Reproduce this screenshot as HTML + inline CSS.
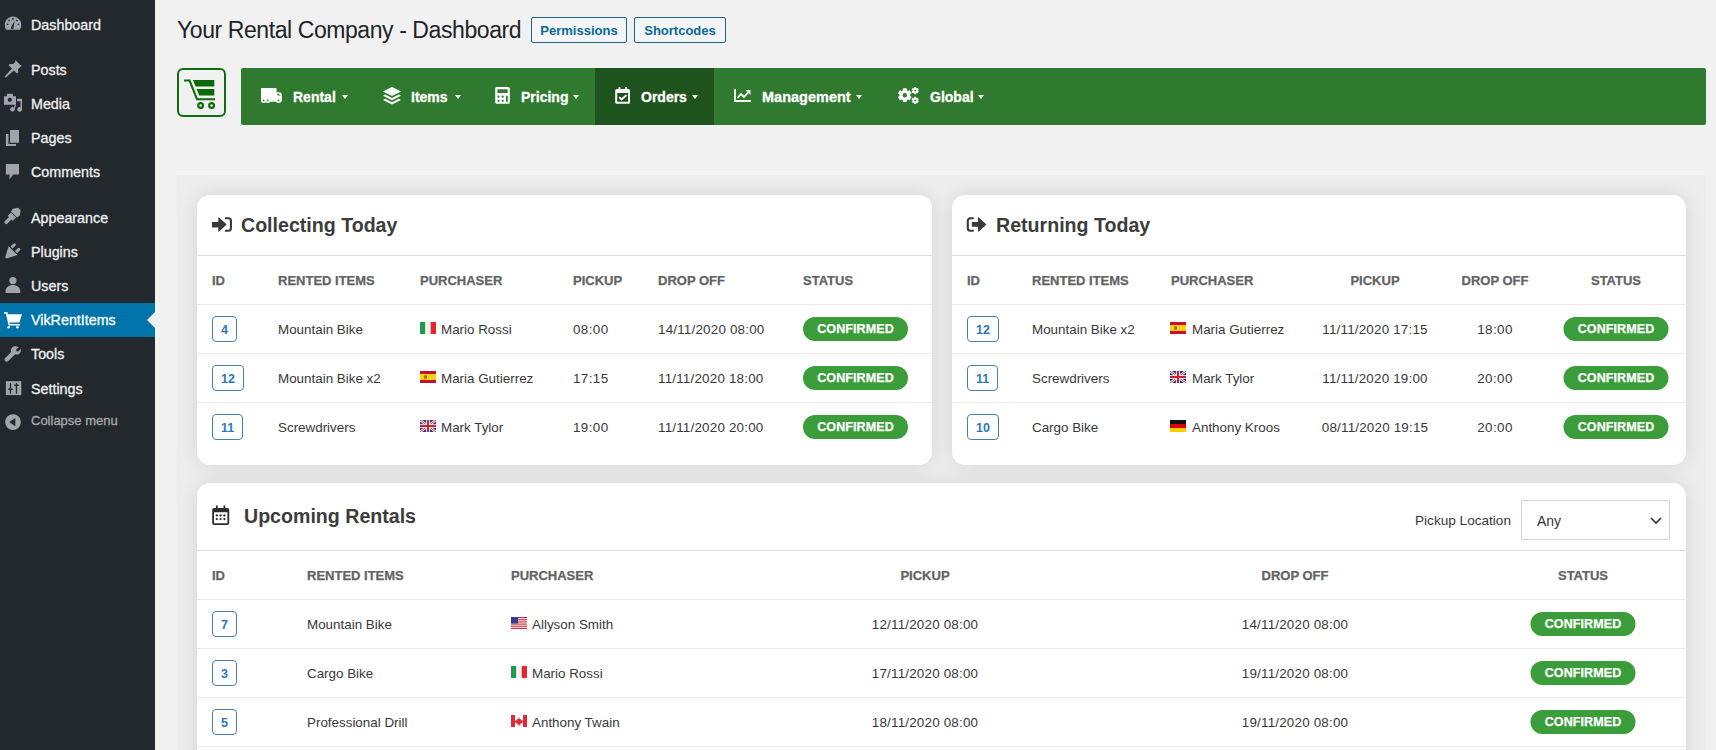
<!DOCTYPE html>
<html><head><meta charset="utf-8">
<style>
*{box-sizing:border-box;margin:0;padding:0}
html,body{width:1716px;height:750px;overflow:hidden;background:#f1f1f1;font-family:"Liberation Sans",sans-serif;position:relative}
.abs{position:absolute}
#side{position:absolute;left:0;top:0;width:155px;height:750px;background:#23282d}
.mi{position:absolute;left:0;width:155px;height:34px;line-height:34px;font-size:14.3px;color:#f0f0f1;white-space:nowrap;-webkit-text-stroke:.3px currentColor}
.mi span{position:absolute;left:31px;top:0}
.mi svg{position:absolute;left:4px;top:7px}
.mi.cur{background:#0073aa;color:#fff}
.mi.cur:after{content:"";position:absolute;right:0;top:9px;border:8px solid transparent;border-right-color:#f1f1f1;border-left:0}
h1{position:absolute;left:177px;top:15px;font-size:23px;letter-spacing:-0.42px;font-weight:400;line-height:30px;color:#1d2327;white-space:nowrap}
.btn{position:absolute;top:17px;height:26px;border:1px solid #1d6587;border-radius:2px;background:#f3f5f6;color:#0a6895;font-size:13px;font-weight:700;line-height:26px;text-align:center;white-space:nowrap}
#logo{position:absolute;left:177px;top:68px;width:49px;height:49px;border:2.5px solid #0e6e0e;border-radius:6px}
#nav{position:absolute;left:241px;top:68px;width:1465px;height:57px;background:#2f7a2f;border-radius:2px}
.ni{position:absolute;top:0;height:57px;color:#fff;font-size:14px;font-weight:700;line-height:57px;white-space:nowrap}
.ni svg{position:absolute}
.ni span{top:1px;line-height:57px;-webkit-text-stroke:.3px #fff}
.car{position:absolute;top:27px;width:0;height:0;border-left:3.7px solid transparent;border-right:3.7px solid transparent;border-top:4.2px solid #fff}
#wrap{position:absolute;left:177px;top:175px;width:1529px;height:600px;background:#ededed;box-shadow:0 -2px 0 #f4f4f4}
.card{position:absolute;background:#fff;border-radius:13px;box-shadow:0 0 20px rgba(0,0,0,.1)}
.ct{position:absolute;font-size:19.6px;font-weight:700;color:#3c3c3c;white-space:nowrap;line-height:24px}
.hl{position:absolute;left:0;right:0;height:1px;background:#dcdcdc}
.rl{position:absolute;left:0;right:0;height:1px;background:#ececec}
.th{position:absolute;font-size:13px;font-weight:700;color:#636363;white-space:nowrap;line-height:16px;-webkit-text-stroke:.25px #636363}
.td{position:absolute;font-size:13.4px;color:#383838;white-space:nowrap;line-height:16px}
.c{transform:translateX(-50%)}
.dt{letter-spacing:.2px}
.tm{letter-spacing:.4px}
.idb{position:absolute;height:26px;border:1px solid #4a7fae;border-radius:4px;color:#2a78bb;font-size:12.5px;font-weight:700;line-height:26px;padding:0 8px;white-space:nowrap;text-align:center}
.ok{position:absolute;width:105px;height:24px;border-radius:12px;background:#3a9d3a;color:#fff;font-size:12.5px;font-weight:700;line-height:24px;-webkit-text-stroke:.25px #fff;letter-spacing:.1px;text-align:center;white-space:nowrap}
.flag{position:absolute;width:16px;height:12px}
.it{background:linear-gradient(90deg,#1e9a46 0 33%,#f4f4f4 33% 66%,#e0283a 66%)}
.es{background:linear-gradient(#c8102e 0 25%,#f5c400 25% 75%,#c8102e 75%)}
.de{background:linear-gradient(#111 0 33%,#dd0000 33% 66%,#ffce00 66%)}
.gb{background:#1f3c88}
.us{background:repeating-linear-gradient(#c8202f 0 1.57px,#fff 1.57px 3.14px)}
.ca{background:linear-gradient(90deg,#e0283a 0 25%,#fff 25% 75%,#e0283a 75%)}
</style></head><body>
<div id="side"><svg class="abs" style="left:0;top:0;z-index:2" width="30" height="450" viewBox="0 0 30 450">
<g fill="#a0a5aa">
<path d="M13 16.6C8.4 16.6 4.8 20.3 4.8 25c0 1.8.5 3.4 1.3 4.8h13.8c.8-1.4 1.3-3 1.3-4.8 0-4.7-3.7-8.4-8.2-8.4z"/>
</g>
<g fill="#23282d">
<circle cx="7.6" cy="24.3" r=".9"/><circle cx="9.1" cy="20.6" r=".9"/><circle cx="13" cy="18.9" r=".9"/><circle cx="16.9" cy="20.6" r=".9"/><circle cx="18.4" cy="24.3" r=".9"/>
<path d="M14.6 20.8l-1 6.4a1.4 1.4 0 11-2.2-.6z"/>
</g>
<path fill="#a0a5aa" d="M15.2 60l6.5 6.3-1.6.6-2 2 .2 3.4-1.3 1.3-3.2-3.2L5.6 77.7l-1-1 7.3-8.2-3.3-3.3 1.3-1.3 3.4.2 2-2z"/>
<path fill="#a0a5aa" fill-rule="evenodd" d="M4 96.2h2.6l.6-2.4h5.4l.6 2.4H16v8.6H4zM7.7 99.8a2.1 2.1 0 104.2 0 2.1 2.1 0 10-4.2 0z"/><path fill="#a0a5aa" d="M17 98.8h5v11.2h-1.5v-8.7H17zM13.5 108.2l1.5-3.6 1.1.5-1.4 3.6z"/><circle cx="19.6" cy="109.4" r="2.3" fill="#a0a5aa"/><circle cx="12.5" cy="109.2" r="2.3" fill="#a0a5aa"/>
<path fill="#a0a5aa" d="M10 130h9v12.7h-9zM5.9 133.9h2.6v10.2H16v2H5.9z"/>
<path fill="#a0a5aa" d="M5.9 164h13.1v10.5h-5.8l-3.7 4.9v-4.9H5.9z"/>
<path fill="#a0a5aa" transform="translate(4.9 223.6) rotate(-45)" d="M1.8-1.8H8v3.6H1.8A1.8 1.8 0 011.8-1.8zM7.6-3.6h4.6v7.2H7.6zM12.8-4.2L16-4.9l4.6 3.2v3.4L16 4.9l-3.2-.7z"/>
<path fill="#a0a5aa" transform="translate(6 257.6) rotate(-45)" d="M0.4 -1.2L9.9 -6.3V6.3L0.4 1.2A1.3 1.3 0 010.4-1.2zM11 -4.7h4a1.5 1.5 0 010 3h-4zM11 1.7h4a1.5 1.5 0 010 3h-4z"/>
<circle cx="12.9" cy="280.6" r="3.6" fill="#a0a5aa"/><path fill="#a0a5aa" d="M5.6 293v-2.5c0-3 3.3-5.6 7.3-5.6s7.3 2.6 7.3 5.6V293z"/>
<g fill="#fff"><path d="M4.1 312h3.2l.7 2.3h14l-2.6 8.2H9.4l.4 1.5h10.3v1.6H8.6L5.9 313.7H4.1z"/><circle cx="8.6" cy="327.3" r="1.3"/><circle cx="17.4" cy="327.3" r="1.3"/></g>
<path fill="#a0a5aa" d="M18.8 346.9l-2.7 2.7.3 1.7 1.7.3 2.7-2.7c.5 1.9-.1 3.9-1.8 5-1.2.7-2.6.8-3.8.3L8.3 361.1c-.9.9-2.3.9-3.1 0-.9-.9-.9-2.2 0-3.1l6-6c-.5-1.2-.4-2.6.3-3.8 1.1-1.7 3.1-2.3 5-1.8z"/>
<path fill="#a0a5aa" d="M5.9 381.2h15.4v13.9H5.9z"/>
<g fill="#23282d"><path d="M9.8 383v5.5H8.2v1.5h1.6v3.8h1.3V390h1.6v-1.5h-1.6V383zM15.8 383v1.5h-1.6v1.5h1.6v7.8h1.3V386h1.6v-1.5h-1.6V383z"/></g>
<circle cx="13" cy="422.1" r="7.9" fill="#a0a5aa"/><path fill="#23282d" d="M15.3 418v8.2L9.3 422.1z"/>
</svg>
  <div class="mi" style="top:8px"><span>Dashboard</span></div>
  <div class="mi" style="top:53px"><span>Posts</span></div>
  <div class="mi" style="top:87px"><span>Media</span></div>
  <div class="mi" style="top:121px"><span>Pages</span></div>
  <div class="mi" style="top:155px"><span>Comments</span></div>
  <div class="mi" style="top:201px"><span>Appearance</span></div>
  <div class="mi" style="top:235px"><span>Plugins</span></div>
  <div class="mi" style="top:269px"><span>Users</span></div>
  <div class="mi cur" style="top:303px"><span>VikRentItems</span></div>
  <div class="mi" style="top:337px"><span>Tools</span></div>
  <div class="mi" style="top:372px"><span>Settings</span></div>
  <div class="mi" style="top:404px;font-size:13px;color:#a7aaad"><span>Collapse menu</span></div>
</div>

<h1>Your Rental Company - Dashboard</h1>
<div class="btn" style="left:531px;width:96px">Permissions</div>
<div class="btn" style="left:634px;width:92px">Shortcodes</div>

<div id="logo"><svg class="abs" style="left:-2.5px;top:-2.5px" width="49" height="49" viewBox="0 0 49 49"><path fill="none" stroke="#0b6b0b" stroke-width="2" d="M7 12.6h5.6l7.4 18.6h18"/><path fill="#0b6b0b" d="M15.9 12h21.4v6.6H18.6zM19.6 21.1h17.7v6.4H22.2z"/><circle cx="23.6" cy="37.5" r="2.4" fill="none" stroke="#0b6b0b" stroke-width="2.2"/><circle cx="34.6" cy="37.5" r="2.4" fill="none" stroke="#0b6b0b" stroke-width="2.2"/></svg></div>

<div id="nav">
  <div class="ni" style="left:0;width:128px">
    <svg style="left:20px;top:20px" width="22" height="16" viewBox="0 0 22 16"><path fill="#fff" d="M.8 0h14a.8.8 0 01.8.8v3.5h2.3a3 3 0 013 3v5.7a.8.8 0 01-.8.8H0V.8A.8.8 0 01.8 0z"/><path fill="#2f7a2f" d="M16.4 5.8h1.2l1.6 1.8h-2.8z"/><g fill="#fff"><circle cx="2.6" cy="12.4" r="2.5"/><circle cx="6.8" cy="12.4" r="2.5"/><circle cx="17.6" cy="12.4" r="2.5"/></g><g fill="#2f7a2f"><circle cx="2.6" cy="12.4" r=".9"/><circle cx="6.8" cy="12.4" r=".9"/><circle cx="17.6" cy="12.4" r=".9"/></g></svg>
    <span class="abs" style="left:52px">Rental</span><i class="car" style="left:100.5px"></i></div>
  <div class="ni" style="left:128px;width:114px">
    <svg style="left:14px;top:19px" width="18" height="18" viewBox="0 0 18 18"><path fill="#fff" d="M9 0l9 4.5-9 4.5-9-4.5z"/><path fill="#fff" d="M2.2 7.6L9 11l6.8-3.4L18 8.7 9 13.2 0 8.7z"/><path fill="#fff" d="M2.2 11.8L9 15.2l6.8-3.4L18 12.9 9 17.4 0 12.9z"/></svg>
    <span class="abs" style="left:42px">Items</span><i class="car" style="left:86px"></i></div>
  <div class="ni" style="left:242px;width:112px">
    <svg style="left:12px;top:19px" width="16" height="17" viewBox="0 0 16 17"><path fill="#fff" fill-rule="evenodd" d="M1.7.1h11.6a1.5 1.5 0 011.5 1.5v13.6a1.5 1.5 0 01-1.5 1.5H1.7A1.5 1.5 0 01.2 15.2V1.6A1.5 1.5 0 011.7.1zM2.4 2.3v3.7h10.2V2.3zM11 8.8v5.9h1.8V8.8zM2.4 9.7a1.1 1.1 0 102.2 0 1.1 1.1 0 10-2.2 0zM6.6 9.7a1.1 1.1 0 102.2 0 1.1 1.1 0 10-2.2 0zM2.4 13.8a1.1 1.1 0 102.2 0 1.1 1.1 0 10-2.2 0zM6.6 13.8a1.1 1.1 0 102.2 0 1.1 1.1 0 10-2.2 0z"/></svg>
    <span class="abs" style="left:38px">Pricing</span><i class="car" style="left:90px"></i></div>
  <div class="ni" style="left:354px;width:119px;background:#1e531e">
    <svg style="left:20px;top:19px" width="16" height="17" viewBox="0 0 16 17"><path fill="#fff" fill-rule="evenodd" d="M3.6 0h1.8v2h4.7V0h1.8v2h1.6a1.5 1.5 0 011.5 1.5v11.8a1.5 1.5 0 01-1.5 1.5H1.7A1.5 1.5 0 01.2 15.3V3.5A1.5 1.5 0 011.7 2h1.9zM2.2 6v8.8H13V6z"/><path fill="none" stroke="#fff" stroke-width="1.9" d="M4.2 10.2l2.3 2.3 5-4.4"/></svg>
    <span class="abs" style="left:46px">Orders</span><i class="car" style="left:97px"></i></div>
  <div class="ni" style="left:473px;width:156px">
    <svg style="left:20px;top:21px" width="17" height="13" viewBox="0 0 17 13"><path fill="none" stroke="#fff" stroke-width="1.8" d="M1 0v12h16"/><path fill="none" stroke="#fff" stroke-width="1.8" d="M3.5 9l3.5-4 3 3 4.5-5"/><path fill="#fff" d="M11.5 1h5v5z"/></svg>
    <span class="abs" style="left:48px;font-size:14.5px">Management</span><i class="car" style="left:142px"></i></div>
  <div class="ni" style="left:629px;width:140px">
    <svg style="left:27px;top:19px" width="24" height="19" viewBox="0 0 24 19"><path fill="#fff" fill-rule="evenodd" d="M5.96 1.34 L9.64 1.34 L9.84 3.20 L11.11 3.93 L12.82 3.18 L14.66 6.36 L13.15 7.47 L13.15 8.93 L14.66 10.04 L12.82 13.22 L11.11 12.47 L9.84 13.20 L9.64 15.06 L5.96 15.06 L5.76 13.20 L4.49 12.47 L2.78 13.22 L0.94 10.04 L2.45 8.93 L2.45 7.47 L0.94 6.36 L2.78 3.18 L4.49 3.93 L5.76 3.20ZM5.60 8.20a2.2 2.2 0 1 0 4.4 0a2.2 2.2 0 1 0 -4.4 0ZM17.24 0.03 L19.16 0.03 L19.22 1.10 L19.85 1.47 L20.82 0.98 L21.77 2.64 L20.88 3.23 L20.88 3.97 L21.77 4.56 L20.82 6.22 L19.85 5.73 L19.22 6.10 L19.16 7.17 L17.24 7.17 L17.18 6.10 L16.55 5.73 L15.58 6.22 L14.63 4.56 L15.52 3.97 L15.52 3.23 L14.63 2.64 L15.58 0.98 L16.55 1.47 L17.18 1.10ZM17.30 3.60a0.9 0.9 0 1 0 1.8 0a0.9 0.9 0 1 0 -1.8 0ZM17.24 9.83 L19.16 9.83 L19.22 10.90 L19.85 11.27 L20.82 10.78 L21.77 12.44 L20.88 13.03 L20.88 13.77 L21.77 14.36 L20.82 16.02 L19.85 15.53 L19.22 15.90 L19.16 16.97 L17.24 16.97 L17.18 15.90 L16.55 15.53 L15.58 16.02 L14.63 14.36 L15.52 13.77 L15.52 13.03 L14.63 12.44 L15.58 10.78 L16.55 11.27 L17.18 10.90ZM17.30 13.40a0.9 0.9 0 1 0 1.8 0a0.9 0.9 0 1 0 -1.8 0Z"/></svg>
    <span class="abs" style="left:60px">Global</span><i class="car" style="left:108.3px"></i></div>
</div>

<div id="wrap"></div>

<!-- Card 1 -->
<div class="card" style="left:197px;top:195px;width:735px;height:270px">
  <svg class="abs" style="left:15px;top:22px" width="20" height="15" viewBox="0 0 20 15"><path fill="#3a3a3a" d="M0 5h6.3V0.8a.5.5 0 01.8-.4l7.1 6.7a.6.6 0 010 .8l-7.1 6.7a.5.5 0 01-.8-.4V10.6H0z"/><path fill="none" stroke="#3a3a3a" stroke-width="2.1" d="M12.9 1.3h3.5a2.5 2.5 0 012.5 2.5v7.4a2.5 2.5 0 01-2.5 2.5h-3.5"/></svg>
  <div class="ct" style="left:44px;top:18px">Collecting Today</div>
  <div class="hl" style="top:60px"></div>
  <div class="th" style="left:15px;top:78px">ID</div>
  <div class="th" style="left:81px;top:78px">RENTED ITEMS</div>
  <div class="th" style="left:223px;top:78px">PURCHASER</div>
  <div class="th" style="left:376px;top:78px">PICKUP</div>
  <div class="th" style="left:461px;top:78px">DROP OFF</div>
  <div class="th" style="left:606px;top:78px">STATUS</div>
  <div class="rl" style="top:109px"></div>
  <div class="rl" style="top:158px"></div>
  <div class="rl" style="top:207px"></div>
  <!-- rows -->
  <div class="idb" style="left:15px;top:121px">4</div>
  <div class="td" style="left:81px;top:127px">Mountain Bike</div>
  <svg class="flag" style="left:223px;top:127px" width="16" height="12" viewBox="0 0 16 12"><rect width="5.4" height="12" fill="#1f9a4a"/><rect x="5.4" width="5.3" height="12" fill="#f5f5f5"/><rect x="10.7" width="5.3" height="12" fill="#e8232f"/></svg><div class="td" style="left:244px;top:127px">Mario Rossi</div>
  <div class="td tm" style="left:376px;top:127px">08:00</div>
  <div class="td dt" style="left:461px;top:127px">14/11/2020 08:00</div>
  <div class="ok" style="left:606px;top:122px">CONFIRMED</div>

  <div class="idb" style="left:15px;top:170px">12</div>
  <div class="td" style="left:81px;top:176px">Mountain Bike x2</div>
  <svg class="flag" style="left:223px;top:176px" width="16" height="12" viewBox="0 0 16 12"><rect width="16" height="12" fill="#c8102e"/><rect y="3" width="16" height="6" fill="#f7d117"/><rect x="4" y="4.3" width="3" height="3.4" rx=".8" fill="#b5651d"/></svg><div class="td" style="left:244px;top:176px">Maria Gutierrez</div>
  <div class="td tm" style="left:376px;top:176px">17:15</div>
  <div class="td dt" style="left:461px;top:176px">11/11/2020 18:00</div>
  <div class="ok" style="left:606px;top:171px">CONFIRMED</div>

  <div class="idb" style="left:15px;top:219px">11</div>
  <div class="td" style="left:81px;top:225px">Screwdrivers</div>
  <svg class="flag" style="left:223px;top:225px" width="16" height="12" viewBox="0 0 16 12"><rect width="16" height="12" fill="#1f3c8c"/><path d="M0 0L16 12M16 0L0 12" stroke="#fff" stroke-width="2.4"/><path d="M0 0L16 12M16 0L0 12" stroke="#d0202e" stroke-width=".9"/><path d="M8 0v12M0 6h16" stroke="#fff" stroke-width="3.6"/><path d="M8 0v12M0 6h16" stroke="#d0202e" stroke-width="2"/></svg><div class="td" style="left:244px;top:225px">Mark Tylor</div>
  <div class="td tm" style="left:376px;top:225px">19:00</div>
  <div class="td dt" style="left:461px;top:225px">11/11/2020 20:00</div>
  <div class="ok" style="left:606px;top:220px">CONFIRMED</div>
</div>

<!-- Card 2 -->
<div class="card" style="left:952px;top:195px;width:734px;height:270px">
  <svg class="abs" style="left:14px;top:22px" width="20" height="15" viewBox="0 0 20 15"><path fill="none" stroke="#3a3a3a" stroke-width="2.1" d="M7.8 1.3H4.3a2.5 2.5 0 00-2.5 2.5v7.4a2.5 2.5 0 002.5 2.5h3.5"/><path fill="#3a3a3a" d="M5.8 5h6.2V0.8a.5.5 0 01.8-.4l7.1 6.7a.6.6 0 010 .8l-7.1 6.7a.5.5 0 01-.8-.4V9.8H5.8z"/></svg>
  <div class="ct" style="left:44px;top:18px">Returning Today</div>
  <div class="hl" style="top:60px"></div>
  <div class="th" style="left:15px;top:78px">ID</div>
  <div class="th" style="left:80px;top:78px">RENTED ITEMS</div>
  <div class="th" style="left:219px;top:78px">PURCHASER</div>
  <div class="th c" style="left:423px;top:78px">PICKUP</div>
  <div class="th c" style="left:543px;top:78px">DROP OFF</div>
  <div class="th c" style="left:664px;top:78px">STATUS</div>
  <div class="rl" style="top:109px"></div>
  <div class="rl" style="top:158px"></div>
  <div class="rl" style="top:207px"></div>

  <div class="idb" style="left:15px;top:121px">12</div>
  <div class="td" style="left:80px;top:127px">Mountain Bike x2</div>
  <svg class="flag" style="left:218px;top:127px" width="16" height="12" viewBox="0 0 16 12"><rect width="16" height="12" fill="#c8102e"/><rect y="3" width="16" height="6" fill="#f7d117"/><rect x="4" y="4.3" width="3" height="3.4" rx=".8" fill="#b5651d"/></svg><div class="td" style="left:240px;top:127px">Maria Gutierrez</div>
  <div class="td dt c" style="left:423px;top:127px">11/11/2020 17:15</div>
  <div class="td tm c" style="left:543px;top:127px">18:00</div>
  <div class="ok c" style="left:664px;top:122px">CONFIRMED</div>

  <div class="idb" style="left:15px;top:170px">11</div>
  <div class="td" style="left:80px;top:176px">Screwdrivers</div>
  <svg class="flag" style="left:218px;top:176px" width="16" height="12" viewBox="0 0 16 12"><rect width="16" height="12" fill="#1f3c8c"/><path d="M0 0L16 12M16 0L0 12" stroke="#fff" stroke-width="2.4"/><path d="M0 0L16 12M16 0L0 12" stroke="#d0202e" stroke-width=".9"/><path d="M8 0v12M0 6h16" stroke="#fff" stroke-width="3.6"/><path d="M8 0v12M0 6h16" stroke="#d0202e" stroke-width="2"/></svg><div class="td" style="left:240px;top:176px">Mark Tylor</div>
  <div class="td dt c" style="left:423px;top:176px">11/11/2020 19:00</div>
  <div class="td tm c" style="left:543px;top:176px">20:00</div>
  <div class="ok c" style="left:664px;top:171px">CONFIRMED</div>

  <div class="idb" style="left:15px;top:219px">10</div>
  <div class="td" style="left:80px;top:225px">Cargo Bike</div>
  <svg class="flag" style="left:218px;top:225px" width="16" height="12" viewBox="0 0 16 12"><rect width="16" height="4" fill="#111"/><rect y="4" width="16" height="4" fill="#dd0000"/><rect y="8" width="16" height="4" fill="#ffce00"/></svg><div class="td" style="left:240px;top:225px">Anthony Kroos</div>
  <div class="td dt c" style="left:423px;top:225px">08/11/2020 19:15</div>
  <div class="td tm c" style="left:543px;top:225px">20:00</div>
  <div class="ok c" style="left:664px;top:220px">CONFIRMED</div>
</div>

<!-- Card 3 -->
<div class="card" style="left:197px;top:483px;width:1489px;height:300px">
  <svg class="abs" style="left:15px;top:22px" width="18" height="21" viewBox="0 0 18 21"><path fill="#2c2c2c" d="M3.9 0.4h1.8v2.6h5.8V0.4h1.8v2.6H15.2a2 2 0 012 2V18a2 2 0 01-2 2H2.2a2 2 0 01-2-2V5a2 2 0 012-2h1.7zM2 7.2V18.2h13.4V7.2z"/><g fill="#2c2c2c"><circle cx="4.8" cy="10.4" r="1.15"/><circle cx="8.6" cy="10.4" r="1.15"/><circle cx="12.4" cy="10.4" r="1.15"/><circle cx="4.8" cy="14.1" r="1.15"/><circle cx="8.6" cy="14.1" r="1.15"/><circle cx="12.4" cy="14.1" r="1.15"/></g></svg>
  <div class="ct" style="left:47px;top:21px">Upcoming Rentals</div>
  <div class="td" style="left:1218px;top:30px;font-size:13.6px">Pickup Location</div>
  <div class="abs" style="left:1324px;top:17px;width:149px;height:40px;border:1px solid #d4d4d4;border-radius:2px;background:#fff"><span class="abs" style="left:15px;top:12px;font-size:14px;color:#2c3338">Any</span><svg class="abs" style="left:128px;top:16px" width="12" height="8" viewBox="0 0 12 8"><path fill="none" stroke="#2c3338" stroke-width="1.6" d="M1 1l5 5 5-5"/></svg></div>
  <div class="hl" style="top:67px"></div>
  <div class="th" style="left:15px;top:85px">ID</div>
  <div class="th" style="left:110px;top:85px">RENTED ITEMS</div>
  <div class="th" style="left:314px;top:85px">PURCHASER</div>
  <div class="th c" style="left:728px;top:85px">PICKUP</div>
  <div class="th c" style="left:1098px;top:85px">DROP OFF</div>
  <div class="th c" style="left:1386px;top:85px">STATUS</div>
  <div class="rl" style="top:116px"></div>
  <div class="rl" style="top:165px"></div>
  <div class="rl" style="top:214px"></div>
  <div class="rl" style="top:263px"></div>

  <div class="idb" style="left:15px;top:128px">7</div>
  <div class="td" style="left:110px;top:134px">Mountain Bike</div>
  <svg class="flag" style="left:314px;top:134px" width="16" height="12" viewBox="0 0 16 12"><rect width="16" height="12" fill="#fff"/><rect y="0.00" width="16" height=".923" fill="#c8202f"/><rect y="1.85" width="16" height=".923" fill="#c8202f"/><rect y="3.69" width="16" height=".923" fill="#c8202f"/><rect y="5.54" width="16" height=".923" fill="#c8202f"/><rect y="7.38" width="16" height=".923" fill="#c8202f"/><rect y="9.23" width="16" height=".923" fill="#c8202f"/><rect y="11.08" width="16" height=".923" fill="#c8202f"/><rect width="7" height="6.5" fill="#3c3b8e"/></svg><div class="td" style="left:335px;top:134px">Allyson Smith</div>
  <div class="td dt c" style="left:728px;top:134px">12/11/2020 08:00</div>
  <div class="td dt c" style="left:1098px;top:134px">14/11/2020 08:00</div>
  <div class="ok c" style="left:1386px;top:129px">CONFIRMED</div>

  <div class="idb" style="left:15px;top:177px">3</div>
  <div class="td" style="left:110px;top:183px">Cargo Bike</div>
  <svg class="flag" style="left:314px;top:183px" width="16" height="12" viewBox="0 0 16 12"><rect width="5.4" height="12" fill="#1f9a4a"/><rect x="5.4" width="5.3" height="12" fill="#f5f5f5"/><rect x="10.7" width="5.3" height="12" fill="#e8232f"/></svg><div class="td" style="left:335px;top:183px">Mario Rossi</div>
  <div class="td dt c" style="left:728px;top:183px">17/11/2020 08:00</div>
  <div class="td dt c" style="left:1098px;top:183px">19/11/2020 08:00</div>
  <div class="ok c" style="left:1386px;top:178px">CONFIRMED</div>

  <div class="idb" style="left:15px;top:226px">5</div>
  <div class="td" style="left:110px;top:232px">Professional Drill</div>
  <svg class="flag" style="left:314px;top:232px" width="16" height="12" viewBox="0 0 16 12"><rect width="16" height="12" fill="#fff"/><rect width="4" height="12" fill="#e0283a"/><rect x="12" width="4" height="12" fill="#e0283a"/><path d="M8 2.5l.9 1.6 1-.4-.3 2 1.3-1 .4.9 1-.2-.6 1.6.5.3L9.4 8.8l.2.9H8.3v1.6h-.6V9.7H6.4l.2-.9-2.8-1.5.5-.3-.6-1.6 1 .2.4-.9 1.3 1-.3-2 1 .4z" fill="#e0283a"/></svg><div class="td" style="left:335px;top:232px">Anthony Twain</div>
  <div class="td dt c" style="left:728px;top:232px">18/11/2020 08:00</div>
  <div class="td dt c" style="left:1098px;top:232px">19/11/2020 08:00</div>
  <div class="ok c" style="left:1386px;top:227px">CONFIRMED</div>
</div>
</body></html>
